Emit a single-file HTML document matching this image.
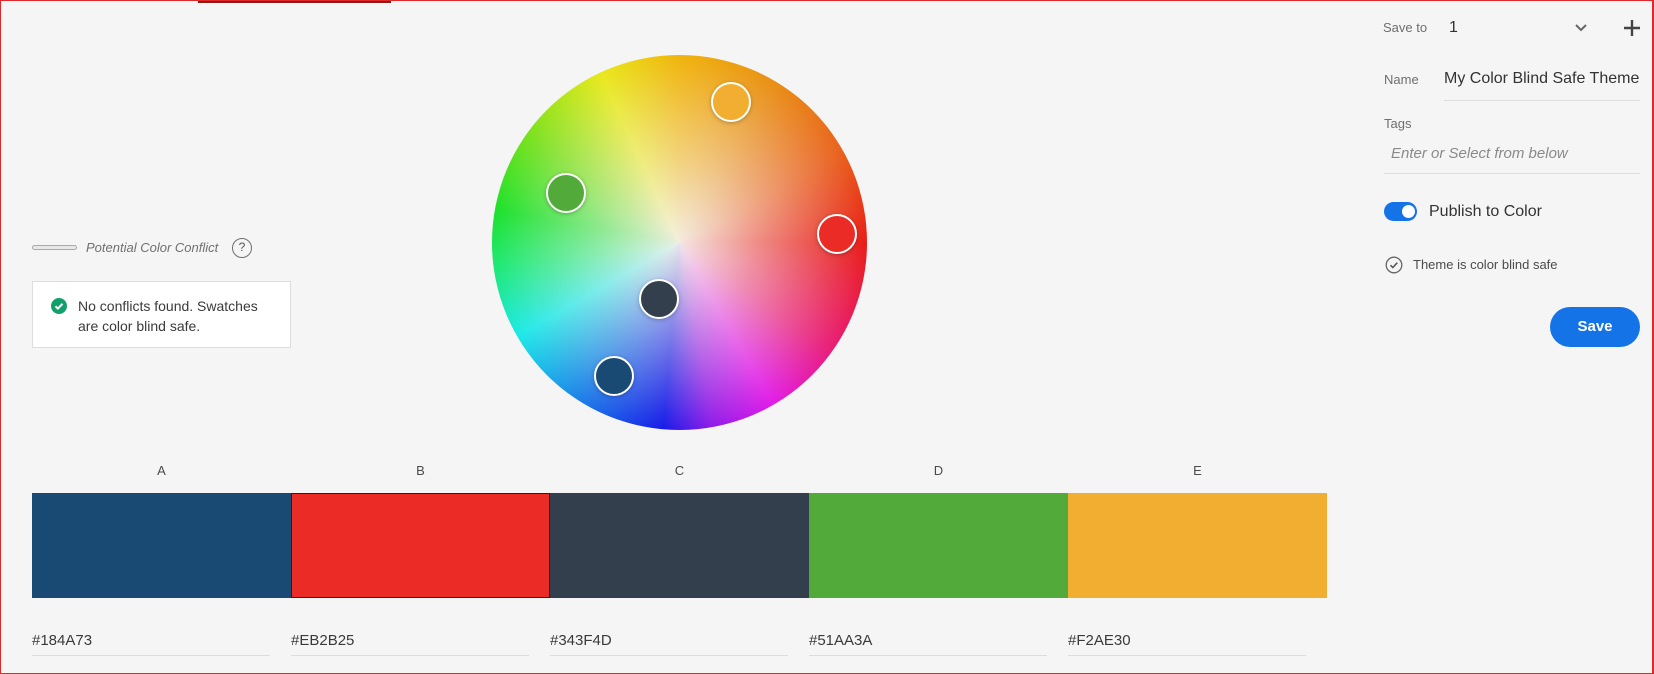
<!DOCTYPE html>
<html><head><meta charset="utf-8"><style>
*{margin:0;padding:0;box-sizing:border-box}
body{width:1654px;height:674px;background:#f5f5f5;font-family:"Liberation Sans",sans-serif;color:#4b4b4b;position:relative;overflow:hidden}
.frame{position:absolute;left:0;top:0;width:1654px;height:674px;border:1px solid #e0282a;border-right-width:2px}
.a{position:absolute;white-space:nowrap}
.wheel{position:absolute;left:492px;top:55px;width:375px;height:375px;border-radius:50%;
background:radial-gradient(circle,rgba(245,240,235,.95) 0%,rgba(245,240,235,.55) 30%,rgba(245,240,235,0) 75%),
conic-gradient(from 0deg,#f0b000 0deg,#e88a08 30deg,#e85a10 60deg,#e8100a 90deg,#e81070 125deg,#e010e8 150deg,#8a10e8 170deg,#0a10e8 185deg,#1070e8 210deg,#10e8e8 240deg,#10e870 262deg,#10e020 280deg,#70e010 305deg,#e8e810 335deg,#f0b000 360deg)}
.h{position:absolute;width:40px;height:40px;border-radius:50%;border:2px solid #fff;box-shadow:0 1px 4px rgba(0,0,0,.25)}
.sw{position:absolute;top:493px;height:105px;width:259px}
.lab{position:absolute;top:463px;width:259px;text-align:center;font-size:13px;color:#4b4b4b}
.hex{position:absolute;top:632px;width:238px;font-size:15px;color:#3a3a3a;border-bottom:1px solid #ddd;height:24px}
</style></head><body>
<div class="a" style="left:198px;top:0;width:193px;height:3px;background:#8b1a1a"></div>

<div class="a" style="left:32px;top:245px;width:45px;height:5px;border:1px solid #aaa;border-radius:3px;background:#e8e8e8"></div>
<div class="a" style="left:86px;top:240px;font-size:13px;font-style:italic;color:#707070">Potential Color Conflict</div>
<div class="a" style="left:232px;top:238px;width:20px;height:20px;border:1.5px solid #707070;border-radius:50%;font-size:12px;text-align:center;line-height:17px;color:#555">?</div>
<div class="a" style="left:32px;top:281px;width:259px;height:67px;background:#fff;border:1px solid #ddd"></div>
<div class="a" style="left:51px;top:298px;width:16px;height:16px;border-radius:50%;background:#12a06a"><svg width="16" height="16" viewBox="0 0 16 16"><path d="M4.5 8.3l2.4 2.3 4.6-4.8" stroke="#fff" stroke-width="2" fill="none"/></svg></div>
<div class="a" style="left:78px;top:296px;font-size:14px;line-height:20px;color:#3a3a3a">No conflicts found. Swatches<br>are color blind safe.</div>

<div class="wheel"></div>
<div class="h" style="left:711px;top:82px;background:#f2ae30"></div>
<div class="h" style="left:546px;top:173px;background:#51aa3a"></div>
<div class="h" style="left:817px;top:214px;background:#eb2b25"></div>
<div class="h" style="left:639px;top:279px;background:#343f4d"></div>
<div class="h" style="left:594px;top:356px;background:#184a73"></div>

<div class="lab" style="left:32px">A</div><div class="lab" style="left:291px">B</div><div class="lab" style="left:550px">C</div><div class="lab" style="left:809px">D</div><div class="lab" style="left:1068px">E</div>
<div class="sw" style="left:32px;background:#184a73"></div>
<div class="sw" style="left:291px;background:#eb2b25;border:1px solid #222"></div>
<div class="sw" style="left:550px;background:#343f4d"></div>
<div class="sw" style="left:809px;background:#51aa3a"></div>
<div class="sw" style="left:1068px;background:#f2ae30"></div>
<div class="hex" style="left:32px">#184A73</div>
<div class="hex" style="left:291px">#EB2B25</div>
<div class="hex" style="left:550px">#343F4D</div>
<div class="hex" style="left:809px">#51AA3A</div>
<div class="hex" style="left:1068px">#F2AE30</div>

<div class="a" style="left:1383px;top:20px;font-size:13px;color:#6e6e6e">Save to</div>
<div class="a" style="left:1449px;top:19px;font-size:16px;color:#333">1</div>
<svg class="a" style="left:1574px;top:23px" width="14" height="10" viewBox="0 0 14 10"><path d="M2 2l5 5 5-5" stroke="#666" stroke-width="2" fill="none"/></svg>
<svg class="a" style="left:1624px;top:20px" width="16" height="16" viewBox="0 0 16 16"><path d="M8 0v16M0 8h16" stroke="#444" stroke-width="2.4"/></svg>
<div class="a" style="left:1384px;top:72px;font-size:13px;color:#6e6e6e">Name</div>
<div class="a" style="left:1444px;top:70px;font-size:16px;color:#333;width:196px;height:31px;border-bottom:1px solid #ddd">My Color Blind Safe Theme</div>
<div class="a" style="left:1384px;top:116px;font-size:13px;color:#6e6e6e">Tags</div>
<div class="a" style="left:1384px;top:145px;width:256px;height:29px;border-bottom:1px solid #ddd;font-size:15px;font-style:italic;color:#8a8a8a;padding-left:7px">Enter or Select from below</div>
<div class="a" style="left:1384px;top:202px;width:33px;height:19px;border-radius:10px;background:#1473e6"></div>
<div class="a" style="left:1402px;top:205px;width:13px;height:13px;border-radius:50%;background:#fff"></div>
<div class="a" style="left:1429px;top:203px;font-size:16px;color:#333">Publish to Color</div>
<svg class="a" style="left:1385px;top:256px" width="18" height="18" viewBox="0 0 18 18"><circle cx="9" cy="9" r="7.8" stroke="#666" stroke-width="1.3" fill="none"/><path d="M5.5 9.2l2.3 2.3 4.5-4.8" stroke="#555" stroke-width="1.5" fill="none"/></svg>
<div class="a" style="left:1413px;top:257px;font-size:13px;color:#4b4b4b">Theme is color blind safe</div>
<div class="a" style="left:1550px;top:307px;width:90px;height:40px;border-radius:20px;background:#1473e6;color:#fff;font-weight:bold;font-size:15px;text-align:center;line-height:40px">Save</div>

<div class="frame"></div>
</body></html>
